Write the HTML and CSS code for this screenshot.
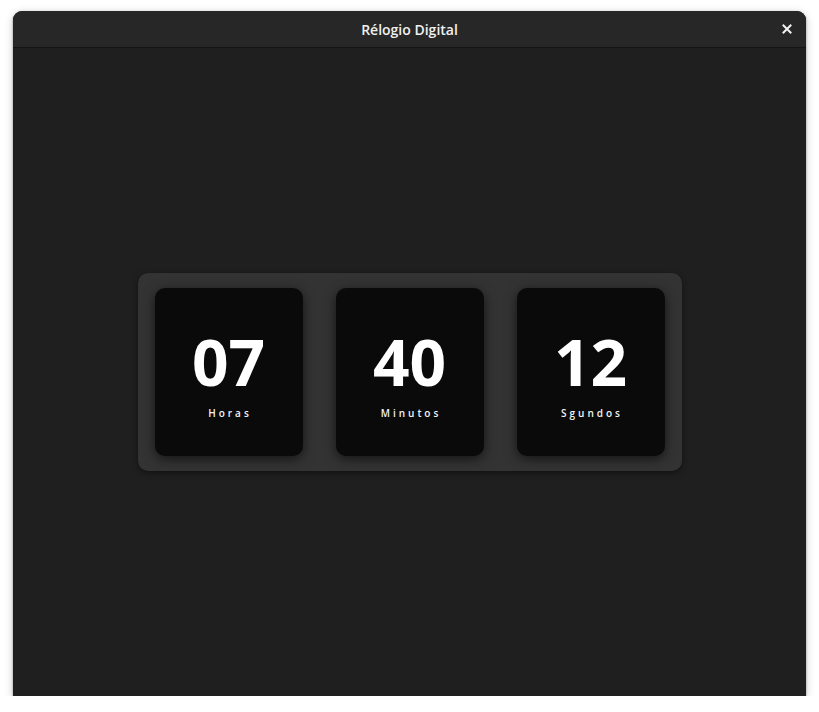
FILE: index.html
```html
<!DOCTYPE html>
<html lang="pt">
<head>
<meta charset="utf-8">
<title>Rélogio Digital</title>
<link rel="stylesheet" href="styles.css">
</head>
<body>
<div class="window">
  <header class="titlebar">
    <span class="title">Rélogio Digital</span>
    <button class="close" aria-label="Fechar">
      <svg width="10" height="10" viewBox="0 0 10 10"><path d="M1.5 1.5 L8.5 8.5 M8.5 1.5 L1.5 8.5" stroke="#f2f2f2" stroke-width="2" stroke-linecap="square"/></svg>
    </button>
  </header>
  <main class="content">
    <div class="clock">
      <div class="card"><div class="num">07</div><div class="label">Horas</div></div>
      <div class="card"><div class="num">40</div><div class="label">Minutos</div></div>
      <div class="card"><div class="num">12</div><div class="label">Sgundos</div></div>
    </div>
  </main>
</div>
</body>
</html>
```

FILE: styles.css
```css
html, body {
  margin: 0;
  padding: 0;
  background: #ffffff;
}
body {
  padding: 11px 13px 0 13px;
  font-family: "Open Sans", "Noto Sans", sans-serif;
}
.window {
  width: 793px;
  height: 685px;
  display: flex;
  flex-direction: column;
  background: #1f1f1f;
  border-radius: 9px 9px 0 0;
  box-shadow: 0 1px 2px rgba(0,0,0,0.45), 0 2px 8px rgba(0,0,0,0.22);
  overflow: hidden;
}
.titlebar {
  position: relative;
  height: 36px;
  flex: none;
  display: flex;
  align-items: center;
  justify-content: center;
  background: #272727;
  border-bottom: 1px solid #141414;
}
.title {
  color: #f0f0f0;
  font-size: 14px;
  font-weight: 600;
}
.close {
  position: absolute;
  right: 14px;
  top: 13px;
  width: 10px;
  height: 10px;
  padding: 0;
  border: 0;
  background: none;
  display: flex;
}
.content {
  flex: 1;
  display: flex;
  align-items: center;
  justify-content: center;
}
.clock {
  display: flex;
  gap: 33px;
  padding: 15px 17px;
  background: #333333;
  border-radius: 10px;
  box-shadow: 0 2px 6px rgba(0,0,0,0.45);
}
.card {
  box-sizing: border-box;
  width: 148px;
  height: 168px;
  padding-top: 30px;
  background: #0a0a0a;
  border-radius: 10px;
  box-shadow: 0 3px 12px rgba(0,0,0,0.6);
  display: flex;
  flex-direction: column;
  align-items: center;
  justify-content: flex-start;
  color: #ffffff;
}
.num {
  font-size: 64px;
  font-weight: 700;
  line-height: 88px;
}
.label {
  font-size: 10px;
  font-weight: 600;
  line-height: 14px;
  letter-spacing: 3px;
  padding-left: 3px;
  color: #f2f2f2;
}
```
